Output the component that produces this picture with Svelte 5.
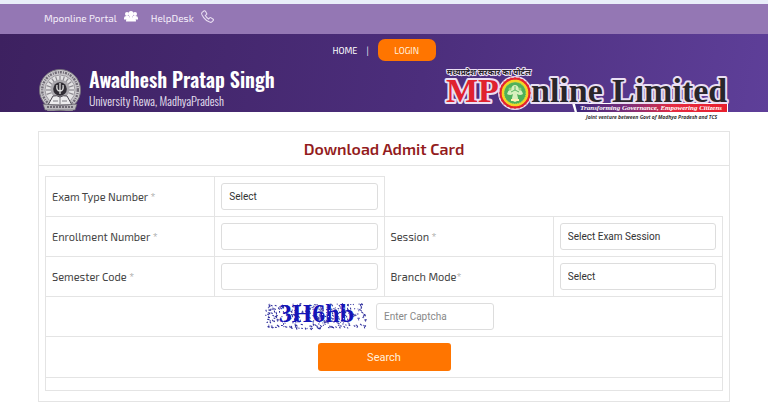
<script>
	let examType = '';
	let enrollment = '';
	let session = '';
	let semester = '';
	let branch = '';
	let captcha = '';

	const spokes = Array.from({ length: 24 }, (_, i) => i * 15);
	const rays = Array.from({ length: 13 }, (_, i) => -108 + i * 18);

	// same speckles on every load
	function speckles(count) {
		let seed = 41;
		const next = () => {
			seed = (seed * 16807) % 2147483647;
			return seed / 2147483647;
		};
		next();
		return Array.from({ length: count }, () => ({
			x: next() * 101,
			y: next() * 25,
			w: 0.8 + next() * 1.6,
			angle: next() * 90
		}));
	}

	const noise = speckles(350);
</script>

<div class="topbar">
	<a href="#portal">Mponline Portal
		<svg class="group" viewBox="0 0 28 22" aria-hidden="true">
			<circle cx="6" cy="6" r="4" />
			<circle cx="22" cy="6" r="4" />
			<path d="M0 17v-3q0-4 5-4h5l2 7zM28 17v-3q0-4-5-4h-5l-2 7z" />
			<path d="M14 0q5 0 5 5 0 4-2 6v2l6 3q1 1 1 5H4q0-4 1-5l6-3v-2Q9 9 9 5q0-5 5-5z" />
		</svg>
	</a>
	<a href="#help">HelpDesk
		<svg class="phone" viewBox="0 0 24 24" aria-hidden="true">
			<path d="M2 4.500 6 1.500q1-.6 2 .5l2.500 4.500q.5 1-.5 2L8 10q2 4 6 6.500l2-2q1-1 2-.4l4.500 3q1 .8.3 2L20 22q-1 1-3 .7Q10 21 5 14T1.300 6q0-1 .7-1.500z" />
		</svg>
	</a>
</div>

<header>
	<nav>
		<a href="#home">HOME</a>
		<span>|</span>
		<button class="login" type="button">LOGIN</button>
	</nav>
	<div class="brand">
		<svg class="seal" viewBox="0 0 44 42" role="img" aria-label="University seal">
			<path d="M11 36 9 42h26l-2-6z" fill="#a9a6ac" />
			<circle cx="22" cy="21" r="20.500" fill="#c9c7cb" stroke="#77727d" />
			<circle cx="22" cy="21" r="17.800" fill="none" stroke="#6f6a75" stroke-width="2.400" stroke-dasharray="2 1.200 1 1" />
			<circle cx="22" cy="21" r="15" fill="#e4e3e5" stroke="#8b888f" stroke-width=".8" />
			{#each rays as angle}
				<path d="M22 7v5" transform="rotate({angle} 22 21)" stroke="#8b888f" stroke-width="1.200" />
			{/each}
			<circle cx="22" cy="20" r="9.500" fill="#aaa8ad" />
			<circle cx="22" cy="20" r="6.800" fill="#302d34" />
			<path d="M22 14v11M19 16q-1 6 3 6t3-6" fill="none" stroke="#ddd" stroke-width="1.300" />
			<path d="M10 36 15 27q4-1 7 1 3-2 7-1l5 9z" fill="#ededee" stroke="#4c4851" />
			<path d="M22 28v7M15 32h5M24 32h5" stroke="#615d66" stroke-width=".8" />
			<path d="M5 35q17 3 34 0l-2 6H7z" fill="#bbb9bd" stroke="#66616c" stroke-width=".7" />
			<path d="M9 38h26" stroke="#55505b" stroke-width="1.500" stroke-dasharray="2 1" />
		</svg>
		<div class="name">
			<h1>Awadhesh Pratap Singh</h1>
			<p>University Rewa, MadhyaPradesh</p>
		</div>
		<svg class="logo" viewBox="0 0 286 58" role="img" aria-label="MPOnline Limited">
			<defs>
				<linearGradient id="ribbon">
					<stop offset="0" stop-color="#39277a" />
					<stop offset=".35" stop-color="#7b2f7b" />
					<stop offset=".65" stop-color="#e62a40" />
					<stop offset="1" stop-color="#e81f2c" />
				</linearGradient>
			</defs>
			<path d="M128 39h156v10H131z" fill="#fff" />
			<g class="outlined">
				<text class="big red" x="2" y="38">MP</text>
				<text class="big" x="87" y="38">nline</text>
				<text class="big" x="168" y="38">Limited</text>
				<text class="hindi" x="3" y="11">मध्यप्रदेश सरकार का पोर्टल</text>
			</g>
			<circle cx="71" cy="29" r="17" fill="#eadff3" />
			<circle cx="71" cy="29" r="14.500" fill="#f6d322" stroke="#e32430" stroke-width="2" />
			{#each spokes as angle}
				<path d="M71 12.500l1.500 3h-3z" transform="rotate({angle} 71 29)" fill="#e32430" />
			{/each}
			<circle cx="71" cy="29" r="11" fill="#4fb05a" />
			<circle cx="71" cy="29" r="11" fill="none" stroke="#d7e64a" stroke-width="1" stroke-dasharray="1 1" />
			<path d="M71 38q-3-1-3-4l1-4q-3 2-6 0 1-4 4-5 1-4 4-4t4 4q3 1 4 5-3 2-6 0l1 4q0 3-3 4z" fill="#d8efbd" />
			<circle cx="66" cy="25" r="1.500" fill="#8fd07a" />
			<circle cx="76" cy="25" r="1.500" fill="#8fd07a" />
			<path d="M71 22v4M67 28l4-2 4 2" fill="none" stroke="#38a84c" stroke-width=".8" />
			<path d="M67 35h8v2h-8z" fill="#fff3b2" />
			<path d="M131 40h152v8H133z" fill="url(#ribbon)" />
			<text class="motto" x="136" y="46">Transforming Governance, Empowering Citizens</text>
			<text class="venture" x="142" y="55">Joint venture between Govt of Madhya Pradesh and TCS</text>
		</svg>
	</div>
</header>

<main>
	<h2>Download Admit Card</h2>
	<form on:submit|preventDefault>
		<table>
			<tbody>
				<tr>
					<td><label for="exam">Exam Type Number <i>*</i></label></td>
					<td>
						<select id="exam" bind:value={examType}>
							<option value="">Select</option>
						</select>
					</td>
					<td class="blank" colspan="2"></td>
				</tr>
				<tr>
					<td><label for="enrollment">Enrollment Number <i>*</i></label></td>
					<td><input id="enrollment" type="text" bind:value={enrollment}></td>
					<td><label for="session">Session <i>*</i></label></td>
					<td>
						<select id="session" bind:value={session}>
							<option value="">Select Exam Session</option>
						</select>
					</td>
				</tr>
				<tr>
					<td><label for="semester">Semester Code <i>*</i></label></td>
					<td><input id="semester" type="text" bind:value={semester}></td>
					<td><label for="branch">Branch Mode<i>*</i></label></td>
					<td>
						<select id="branch" bind:value={branch}>
							<option value="">Select</option>
						</select>
					</td>
				</tr>
				<tr>
					<td colspan="4">
						<div class="captcha">
							<svg viewBox="0 0 102 26" role="img" aria-label="Captcha">
								{#each noise as dot}
									<rect x={dot.x} y={dot.y} width={dot.w} height="1" transform="rotate({dot.angle} {dot.x} {dot.y})" fill="#2a2a9a" />
								{/each}
								<text x="13" y="19">3H6hb</text>
								{#each noise.slice(0, 45) as dot}
									<rect x={dot.y * 4} y={dot.x / 4} width="1" height="1" fill="#fff" />
								{/each}
							</svg>
							<input type="text" aria-label="Enter Captcha" placeholder="Enter Captcha" bind:value={captcha}>
						</div>
					</td>
				</tr>
				<tr>
					<td colspan="4"><button class="search" type="submit">Search</button></td>
				</tr>
				<tr>
					<td colspan="4"></td>
				</tr>
			</tbody>
		</table>
	</form>
</main>

<style>
	:global(body) {
		background: #fff;
		color: #444;
		font-family: "Exo 2", "Noto Sans", sans-serif;
		font-size: 11px;
	}
	a {
		color: inherit;
		text-decoration: none;
	}
	.topbar {
		box-sizing: border-box;
		display: flex;
		gap: 13px;
		height: 34px;
		padding: 0 44px 2px;
		border-top: 4px solid #e9eef9;
		background: #9477b4;
		color: #f4eefa;
		font-size: 10px;
	}
	.topbar a {
		display: flex;
		align-items: center;
		gap: 7px;
	}
	.group {
		width: 14px;
		height: 11px;
		margin-bottom: 3px;
		fill: #fff;
	}
	.phone {
		width: 13px;
		height: 13px;
		margin-bottom: 4px;
		fill: none;
		stroke: #e9def2;
		stroke-width: 2;
	}
	header {
		box-sizing: border-box;
		height: 78px;
		padding: 5px 38px 0;
		background: linear-gradient(100deg, #3d2160, #4c2e7c 55%, #5e3f99);
		color: #fff;
	}
	nav {
		display: flex;
		justify-content: center;
		align-items: center;
		gap: 9px;
		height: 22px;
		font-size: 9px;
	}
	.login {
		width: 58px;
		height: 22px;
		padding: 0;
		border: none;
		border-radius: 7px;
		background: #ff7500;
		color: #fff0df;
		font: inherit;
	}
	.brand {
		display: flex;
		align-items: flex-start;
	}
	.seal {
		width: 44px;
		height: 42px;
		margin-top: 8px;
	}
	.name {
		margin: 4px auto 0 7px;
		font-family: Oswald, "Roboto Condensed", "Liberation Sans Narrow", sans-serif;
		white-space: nowrap;
	}
	h1 {
		margin: 0;
		font-size: 20px;
		line-height: 28px;
		font-weight: 600;
	}
	.name p {
		margin: 0;
		color: #e9e2f2;
		font-size: 12px;
		line-height: 16px;
		font-weight: 300;
	}
	.logo {
		width: 286px;
		height: 58px;
		margin-top: 3px;
	}
	.outlined text {
		paint-order: stroke;
		stroke: #eadff3;
		stroke-width: 4px;
		stroke-linejoin: round;
		fill: #29262b;
	}
	.outlined .hindi {
		font-family: "Noto Sans Devanagari", "Noto Sans", sans-serif;
		font-size: 8px;
		font-weight: bold;
		stroke-width: 2px;
	}
	.big {
		font-family: "Liberation Serif", serif;
		font-size: 34px;
		font-weight: bold;
	}
	.outlined .red {
		fill: #e0222f;
	}
	.motto {
		fill: #fff;
		font: italic bold 7px "Liberation Serif", serif;
	}
	.venture {
		fill: #333;
		font: italic bold 5px "Noto Sans", sans-serif;
	}
	main {
		margin: 19px 38px 10px;
		border: 1px solid #e4e4e4;
	}
	h2 {
		margin: 0;
		border-bottom: 1px solid #e4e4e4;
		color: #931b20;
		font-size: 16px;
		line-height: 33px;
		font-weight: 600;
		text-align: center;
	}
	form {
		padding: 10px 6px;
	}
	table {
		width: 100%;
		border-collapse: collapse;
		table-layout: fixed;
	}
	td {
		padding: 6px;
		border: 1px solid #e4e4e4;
	}
	td.blank {
		border-top: none;
		border-right: none;
	}
	label i {
		color: #999;
		font-style: normal;
	}
	input,
	select {
		box-sizing: border-box;
		display: block;
		width: 100%;
		height: 27px;
		padding: 0 7px;
		appearance: none;
		border: 1px solid #ddd;
		border-radius: 3px;
		background: #fff;
		color: #333;
		font-family: Roboto, sans-serif;
		font-size: 10px;
	}
	input::placeholder {
		color: #888;
	}
	.captcha {
		display: flex;
		justify-content: center;
		gap: 8px;
		margin-right: 8px;
	}
	.captcha svg {
		width: 102px;
		height: 26px;
		overflow: visible;
	}
	.captcha text {
		fill: #1414b8;
		font: bold 26px "Liberation Serif", serif;
	}
	.captcha input {
		width: 118px;
	}
	.search {
		display: block;
		width: 133px;
		height: 28px;
		margin: 0 auto;
		padding: 0;
		border: none;
		border-radius: 3px;
		background: #ff7500;
		color: #fff0df;
		font-family: Roboto, sans-serif;
		font-size: 11px;
	}
</style>
